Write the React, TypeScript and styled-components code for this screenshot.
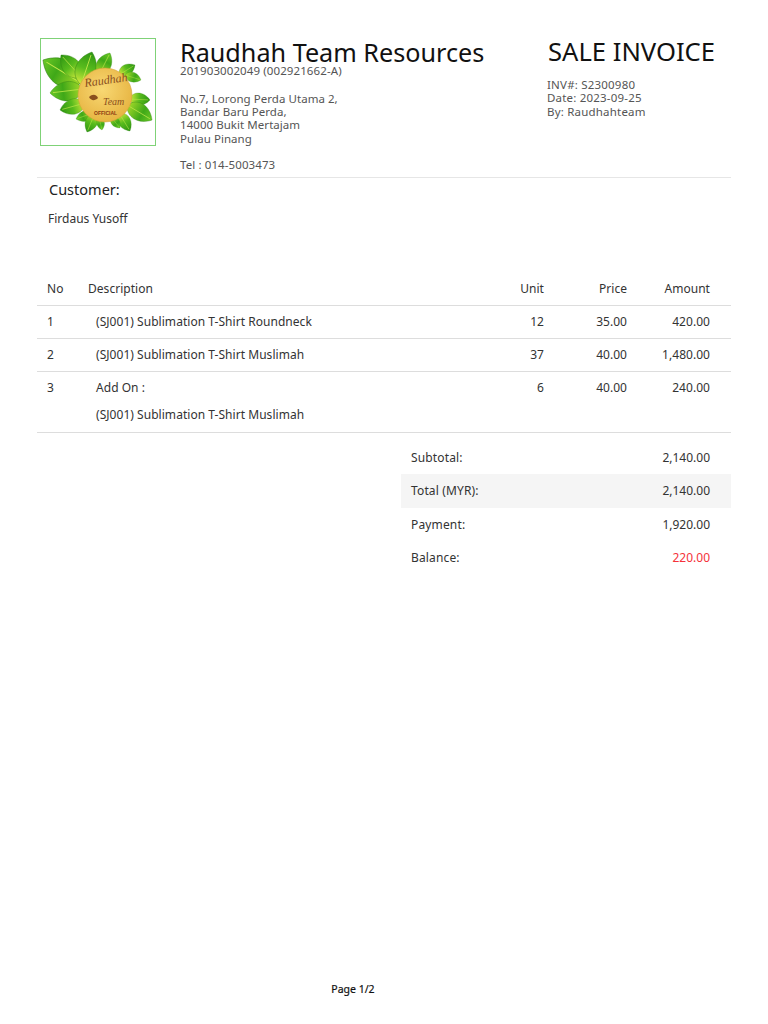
import { createGlobalStyle } from 'styled-components';
import styled from 'styled-components';

const GlobalStyle = createGlobalStyle`
  html, body {
    margin: 0;
    padding: 0;
    background: #fff;
  }
  body {
    font-family: "Noto Sans", "DejaVu Sans", sans-serif;
    color: #333;
  }
`;

const Page = styled.div`
  width: 768px;
  height: 1024px;
  box-sizing: border-box;
  padding: 38px 37px 0;
  display: flex;
  flex-direction: column;
`;

const Header = styled.header`
  display: flex;
  height: 139px;
  border-bottom: 1px solid #e6e6e6;
`;

const LogoBox = styled.div`
  width: 114px;
  height: 106px;
  margin-left: 3px;
  border: 1px solid #7fd277;
  flex: none;
`;

const Company = styled.div`
  margin-left: 24px;
  width: 368px;
  flex: none;
`;

const Title = styled.h1`
  margin: 0;
  font-size: 25.2px;
  line-height: 24px;
  padding-top: 2px;
  font-weight: 400;
  color: #111;
  white-space: nowrap;
`;

const SaleTitle = styled(Title)`
  font-size: 25.6px;
`;

const Small = styled.div`
  font-size: 11.5px;
  line-height: 13.3px;
  color: #555;
  letter-spacing: 0.1px;
`;

const Address = styled(Small)`
  margin-top: 14.5px;
  letter-spacing: 0.05px;
`;

const Phone = styled(Small)`
  margin-top: 13.5px;
`;

const InvoiceInfo = styled.div`
  flex: 1;
`;

const InvoiceLines = styled(Small)`
  margin: 14px 0 0 -1px;
  letter-spacing: 0.2px;
`;

const CustomerLabel = styled.div`
  margin: 2px 0 0 12px;
  font-size: 14.5px;
  line-height: 18px;
  color: #222;
`;

const CustomerName = styled.div`
  margin: 13px 0 0 11px;
  font-size: 12px;
  line-height: 16px;
  color: #333;
`;

const Table = styled.table`
  margin-top: 44px;
  width: 694px;
  border-collapse: collapse;
  table-layout: fixed;
  font-size: 12px;
  color: #333;
  letter-spacing: 0.04px;

  col.no { width: 41px; }
  col.desc { width: 402px; }
  col.unit { width: 64px; }
  col.price { width: 83px; }
  col.amount { width: 104px; }
`;

const Th = styled.th<{ $right?: boolean }>`
  height: 34px;
  padding: 0 ${(p) => (p.$right ? '21px' : '0')} 0 ${(p) => (p.$right ? '0' : '10px')};
  text-align: ${(p) => (p.$right ? 'right' : 'left')};
  font-weight: 400;
  border-bottom: 1px solid #ddd;
  vertical-align: middle;
`;

const HeadRight = styled(Th)`
  padding-right: 0;
`;

const Td = styled.td<{ $right?: boolean }>`
  height: 32px;
  padding: 0;
  padding-left: ${(p) => (p.$right ? '0' : '10px')};
  text-align: ${(p) => (p.$right ? 'right' : 'left')};
  border-bottom: 1px solid #ddd;
  vertical-align: top;
  line-height: 32px;
`;

const DescTd = styled(Td)`
  padding-left: 18px;
`;

const AmountTd = styled(Td)`
  padding-right: 21px;
`;

const SecondLine = styled.div`
  margin-top: -5px;
  padding-bottom: 1px;
  height: 32px;
`;

const Totals = styled.div`
  margin: 8px 0 0 auto;
  width: 330px;
  font-size: 12px;
  letter-spacing: 0.15px;
`;

const TotalRow = styled.div<{ $shaded?: boolean }>`
  height: 33.3px;
  padding: 0 21px 0 10px;
  display: flex;
  align-items: center;
  justify-content: space-between;
  background: ${(p) => (p.$shaded ? '#f5f5f5' : 'transparent')};
`;

const Value = styled.span<{ $red?: boolean }>`
  letter-spacing: 0;
  color: ${(p) => (p.$red ? '#f5323a' : '#333')};
`;

const Footer = styled.div`
  margin-top: auto;
  height: 42px;
  padding-right: 62px;
  text-align: center;
  font-size: 10.5px;
  color: #111;
  -webkit-text-stroke: 0.2px #111;
`;

// base x, base y, tip x, tip y
const leaves: [number, number, number, number][] = [
  [40, 44, 2, 21],
  [40, 38, 20, 16],
  [42, 50, 9, 54],
  [44, 64, 19, 71],
  [52, 74, 35, 80],
  [40, 46, 51, 13],
  [58, 36, 69, 14],
  [78, 36, 94, 26],
  [84, 36, 100, 41],
  [88, 60, 109, 61],
  [86, 66, 111, 81],
  [78, 74, 89, 92],
  [70, 78, 79, 89],
  [54, 74, 46, 93],
  [58, 78, 61, 91],
];

function Leaf({ from, index }: { from: [number, number, number, number]; index: number }) {
  const [x, y, tx, ty] = from;
  const len = Math.hypot(tx - x, ty - y);
  const angle = (Math.atan2(ty - y, tx - x) * 180) / Math.PI;
  const s = len / 44;
  return (
    <g transform={`translate(${x} ${y}) rotate(${angle}) scale(${s})`}>
      <path
        d="M0 0 C8 -18 30 -18 44 0 C30 17 8 16 0 0 Z"
        fill={index % 2 ? 'url(#leafA)' : 'url(#leafB)'}
        stroke="#2a7d12"
        strokeWidth="0.5"
      />
      <path d="M2 0 L40 0" stroke="#c4e84a" strokeWidth="1" fill="none" />
    </g>
  );
}

function Logo() {
  return (
    <svg width="114" height="106" viewBox="0 0 114 106">
      <defs>
        <linearGradient id="leafA" x1="0" y1="0" x2="1" y2="0">
          <stop offset="0" stopColor="#d8ec3e" />
          <stop offset="0.5" stopColor="#58bb1d" />
          <stop offset="1" stopColor="#2d9512" />
        </linearGradient>
        <linearGradient id="leafB" x1="0" y1="0" x2="1" y2="0">
          <stop offset="0" stopColor="#a9dc2a" />
          <stop offset="0.6" stopColor="#3fa818" />
          <stop offset="1" stopColor="#6cc926" />
        </linearGradient>
        <radialGradient id="gold" cx="0.45" cy="0.4" r="0.65">
          <stop offset="0" stopColor="#f8d873" />
          <stop offset="1" stopColor="#e6b23f" />
        </radialGradient>
      </defs>
      {leaves.map((l, i) => (
        <Leaf key={i} from={l} index={i} />
      ))}
      <circle cx="64" cy="56" r="27" fill="url(#gold)" stroke="#cf9f35" strokeWidth="0.5" />
      <text x="44" y="48" fontFamily="Liberation Serif" fontStyle="italic" fontSize="12" fill="#8a4f1e" transform="rotate(-8 44 48)">
        Raudhah
      </text>
      <text x="62" y="66" fontFamily="Liberation Serif" fontStyle="italic" fontSize="10" fill="#8a4f1e">
        Team
      </text>
      <path d="M48 58 c4 -4 8 -2 9 1 c-3 3 -7 3 -9 -1 Z" fill="#8a4f1e" />
      <text x="53" y="76" fontFamily="Liberation Sans" fontWeight="700" fontSize="5" fill="#8a3a12">
        OFFICIAL
      </text>
    </svg>
  );
}

const rows = [
  { no: '1', desc: '(SJ001) Sublimation T-Shirt Roundneck', unit: '12', price: '35.00', amount: '420.00' },
  { no: '2', desc: '(SJ001) Sublimation T-Shirt Muslimah', unit: '37', price: '40.00', amount: '1,480.00' },
];

export default function App() {
  return (
    <Page>
      <GlobalStyle />
      <Header>
        <LogoBox>
          <Logo />
        </LogoBox>
        <Company>
          <Title>Raudhah Team Resources</Title>
          <Small>201903002049 (002921662-A)</Small>
          <Address>
            No.7, Lorong Perda Utama 2,
            <br />
            Bandar Baru Perda,
            <br />
            14000 Bukit Mertajam
            <br />
            Pulau Pinang
          </Address>
          <Phone>Tel : 014-5003473</Phone>
        </Company>
        <InvoiceInfo>
          <SaleTitle>SALE INVOICE</SaleTitle>
          <InvoiceLines>
            INV#: S2300980
            <br />
            Date: 2023-09-25
            <br />
            By: Raudhahteam
          </InvoiceLines>
        </InvoiceInfo>
      </Header>

      <CustomerLabel>Customer:</CustomerLabel>
      <CustomerName>Firdaus Yusoff</CustomerName>

      <Table>
        <colgroup>
          <col className="no" />
          <col className="desc" />
          <col className="unit" />
          <col className="price" />
          <col className="amount" />
        </colgroup>
        <thead>
          <tr>
            <Th>No</Th>
            <Th>Description</Th>
            <HeadRight $right>Unit</HeadRight>
            <HeadRight $right>Price</HeadRight>
            <Th $right>Amount</Th>
          </tr>
        </thead>
        <tbody>
          {rows.map((r) => (
            <tr key={r.no}>
              <Td>{r.no}</Td>
              <DescTd>{r.desc}</DescTd>
              <Td $right>{r.unit}</Td>
              <Td $right>{r.price}</Td>
              <AmountTd $right>{r.amount}</AmountTd>
            </tr>
          ))}
          <tr>
            <Td>3</Td>
            <DescTd>
              Add On :
              <SecondLine>(SJ001) Sublimation T-Shirt Muslimah</SecondLine>
            </DescTd>
            <Td $right>6</Td>
            <Td $right>40.00</Td>
            <AmountTd $right>240.00</AmountTd>
          </tr>
        </tbody>
      </Table>

      <Totals>
        <TotalRow>
          <span>Subtotal:</span>
          <Value>2,140.00</Value>
        </TotalRow>
        <TotalRow $shaded>
          <span>Total (MYR):</span>
          <Value>2,140.00</Value>
        </TotalRow>
        <TotalRow>
          <span>Payment:</span>
          <Value>1,920.00</Value>
        </TotalRow>
        <TotalRow>
          <span>Balance:</span>
          <Value $red>220.00</Value>
        </TotalRow>
      </Totals>

      <Footer>Page 1/2</Footer>
    </Page>
  );
}
